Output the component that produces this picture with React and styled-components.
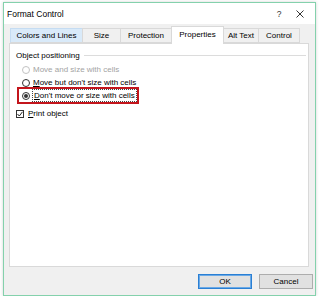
import React from 'react';
import styled, { createGlobalStyle } from 'styled-components';

const GlobalStyle = createGlobalStyle`
  html, body {
    margin: 0;
    background: #ffffff;
  }
  body {
    font-family: "Liberation Sans", Arial, sans-serif;
    font-size: 8px;
    color: #000;
  }
`;

const Window = styled.div`
  margin: 2px 0 0 3px;
  width: 311px;
  height: 292px;
  border: 1px solid #84d1ac;
  background: #f0f0f0;
  box-shadow: 0 0 3px rgba(0, 0, 0, 0.18);
  display: flex;
  flex-direction: column;
`;

const TitleBar = styled.div`
  height: 21px;
  background: #ffffff;
  display: flex;
  align-items: center;
  padding-left: 3px;
  font-size: 8.5px;
`;

const Title = styled.span`
  flex: 1;
`;

const TitleButton = styled.span`
  width: ${(p) => p.width}px;
  display: flex;
  justify-content: center;
  align-items: center;
  color: #333;
`;

const Body = styled.div`
  flex: 1;
  display: flex;
  flex-direction: column;
  padding: 0 6px 0 5px;
`;

const TabRow = styled.div`
  display: flex;
  align-items: flex-end;
  height: 19px;
  padding-left: 1px;
  position: relative;
  z-index: 1;
`;

const Tab = styled.div`
  width: ${(p) => p.width}px;
  height: ${(p) => (p.active ? 18 : 15)}px;
  margin-bottom: ${(p) => (p.active ? -1 : 0)}px;
  box-sizing: border-box;
  border: 1px solid ${(p) => (p.hover ? '#c5dcf2' : '#d9d9d9')};
  border-bottom: ${(p) => (p.active ? 'none' : '1px solid #d9d9d9')};
  margin-left: -1px;
  background: ${(p) => (p.active ? '#ffffff' : p.hover ? '#d9eaf9' : '#f0f0f0')};
  display: flex;
  align-items: center;
  justify-content: center;
  padding-bottom: ${(p) => (p.active ? 2 : 0)}px;
  font-size: 8px;
  &:first-child {
    margin-left: 0;
  }
`;

const Panel = styled.div`
  height: 224px;
  box-sizing: border-box;
  background: #ffffff;
  border: 1px solid #d9d9d9;
  display: flex;
  flex-direction: column;
  padding-left: 6px;
  padding-right: 2px;
`;

const GroupHeader = styled.div`
  margin-top: 6px;
  margin-bottom: 2px;
  height: 11px;
  display: flex;
  align-items: center;
  gap: 4px;
`;

const GroupLine = styled.div`
  flex: 1;
  height: 1px;
  background: #dcdcdc;
`;

const RadioRow = styled.div`
  height: 13px;
  display: flex;
  align-items: center;
  gap: 3px;
  padding-left: ${(p) => (p.inBox ? 3 : 6)}px;
  color: ${(p) => (p.disabled ? '#a3a3a3' : '#000')};
`;

const RadioCircle = styled.span`
  width: 8px;
  height: 8px;
  box-sizing: border-box;
  border-radius: 50%;
  border: 1px solid ${(p) => (p.disabled ? '#c2c2c2' : '#333')};
  background: #fff;
  display: flex;
  align-items: center;
  justify-content: center;
  &::after {
    content: '';
    width: 4px;
    height: 4px;
    border-radius: 50%;
    background: ${(p) => (p.checked ? '#333' : 'transparent')};
  }
`;

const FocusText = styled.span`
  outline: 1px dotted #444;
  outline-offset: 0;
  padding: 0 1px;
  line-height: 11px;
`;

const Highlight = styled.div`
  align-self: flex-start;
  margin: -2px 0 -2px 1px;
  border: 2px solid #c3151c;
  padding-right: 1px;
`;

const CheckRow = styled.div`
  margin-top: 5px;
  height: 13px;
  display: flex;
  align-items: center;
  gap: 4px;
`;

const CheckBox = styled.span`
  width: 8px;
  height: 8px;
  box-sizing: border-box;
  border: 1px solid #333;
  background: #fff;
  display: flex;
  align-items: center;
  justify-content: center;
`;

const Key = styled.span`
  text-decoration: underline;
`;

const Footer = styled.div`
  flex: 1;
  display: flex;
  justify-content: flex-end;
  align-items: center;
  gap: 4px;
  padding: 1px 0 0 0;
  margin-right: -4px;
`;

const Button = styled.button`
  width: 54px;
  height: 15px;
  box-sizing: border-box;
  border: 1px solid ${(p) => (p.primary ? '#2a7fd4' : '#adadad')};
  box-shadow: ${(p) => (p.primary ? 'inset 0 0 0 1px #6aa9e6' : 'none')};
  background: #e1e1e1;
  font-family: "Liberation Sans", Arial, sans-serif;
  font-size: 8px;
  color: #000;
  padding: 0;
  margin-left: 3px;
`;

const tabs = [
  { label: 'Colors and Lines', width: 73, hover: true },
  { label: 'Size', width: 39 },
  { label: 'Protection', width: 52 },
  { label: 'Properties', width: 53, active: true },
  { label: 'Alt Text', width: 36 },
  { label: 'Control', width: 42 },
];

const App = () => (
  <>
    <GlobalStyle />
    <Window>
      <TitleBar>
        <Title>Format Control</Title>
        <TitleButton width={12}>?</TitleButton>
        <TitleButton width={30}>
          <svg width="8" height="8" viewBox="0 0 8 8">
            <path d="M0.5 0.5 L7.5 7.5 M7.5 0.5 L0.5 7.5" stroke="#333" strokeWidth="1" />
          </svg>
        </TitleButton>
      </TitleBar>
      <Body>
        <TabRow>
          {tabs.map((t) => (
            <Tab key={t.label} width={t.width} active={t.active} hover={t.hover}>
              {t.label}
            </Tab>
          ))}
        </TabRow>
        <Panel>
          <GroupHeader>
            <span>Object positioning</span>
            <GroupLine />
          </GroupHeader>
          <RadioRow disabled>
            <RadioCircle disabled />
            <span>Move and size with cells</span>
          </RadioRow>
          <RadioRow>
            <RadioCircle />
            <span><Key>M</Key>ove but don't size with cells</span>
          </RadioRow>
          <Highlight>
            <RadioRow inBox>
              <RadioCircle checked />
              <FocusText><Key>D</Key>on't move or size with cells</FocusText>
            </RadioRow>
          </Highlight>
          <CheckRow>
            <CheckBox>
              <svg width="6" height="6" viewBox="0 0 6 6">
                <path d="M0.5 3 L2.3 5 L5.5 0.8" stroke="#222" strokeWidth="1" fill="none" />
              </svg>
            </CheckBox>
            <span><Key>P</Key>rint object</span>
          </CheckRow>
        </Panel>
        <Footer>
          <Button primary>OK</Button>
          <Button>Cancel</Button>
        </Footer>
      </Body>
    </Window>
  </>
);

export default App;
